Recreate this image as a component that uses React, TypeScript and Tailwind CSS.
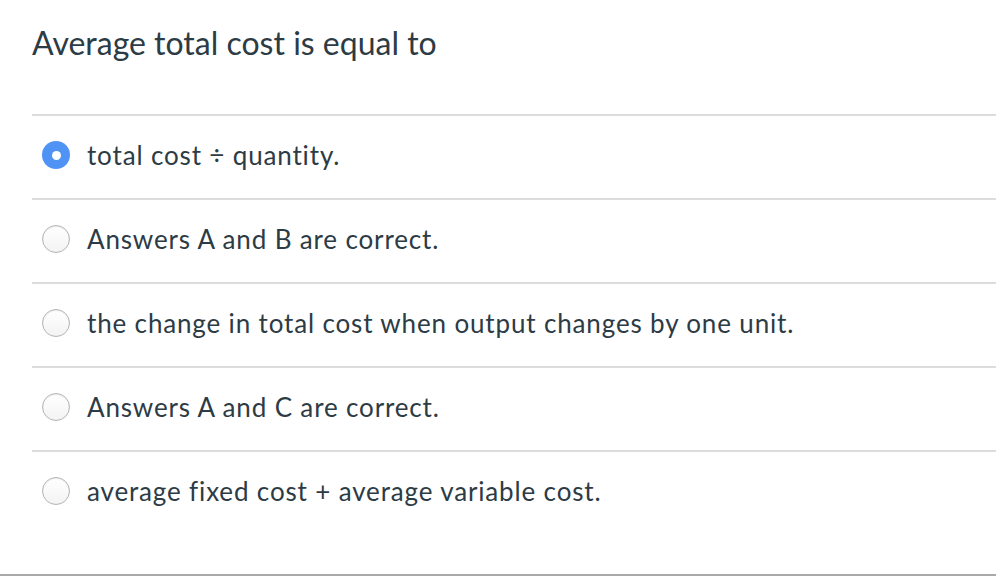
import React from "react";

const options = [
  { text: "total cost ÷ quantity.", selected: true },
  { text: "Answers A and B are correct.", selected: false },
  { text: "the change in total cost when output changes by one unit.", selected: false },
  { text: "Answers A and C are correct.", selected: false },
  { text: "average fixed cost + average variable cost.", selected: false },
];

function Radio({ selected }: { selected: boolean }) {
  if (selected) {
    return (
      <div className="w-[28px] h-[28px] rounded-full bg-[#4f94f4] flex items-center justify-center shrink-0">
        <div className="w-[9px] h-[9px] rounded-full bg-white" />
      </div>
    );
  }
  return (
    <div className="w-[28px] h-[28px] rounded-full border border-[#b4b4b4] bg-gradient-to-b from-[#ffffff] to-[#f3f3f3] shadow-[inset_0_1px_1px_rgba(0,0,0,0.08)] shrink-0" />
  );
}

export default function App() {
  return (
    <div className="w-[996px] h-[588px] bg-white text-[#2d3b45] font-['Lato','Open_Sans',sans-serif] relative overflow-hidden">
      <div className="pl-[32px]">
        <div className="h-[114px] pt-[23px]">
          <h1 className="text-[32px] leading-[40px] font-normal">Average total cost is equal to</h1>
        </div>
        <div>
          {options.map((o, i) => (
            <div key={i} className="border-t-2 border-[#dcdcdc] h-[84px] flex items-center gap-[17px] pl-[10px] pb-[4px]">
              <Radio selected={o.selected} />
              <span className="text-[26px] leading-[30px] tracking-[0.85px]">{o.text}</span>
            </div>
          ))}
        </div>
      </div>
      <div className="absolute left-0 right-0 top-[574px] h-[2px] bg-[#a9a9a9]" />
    </div>
  );
}
